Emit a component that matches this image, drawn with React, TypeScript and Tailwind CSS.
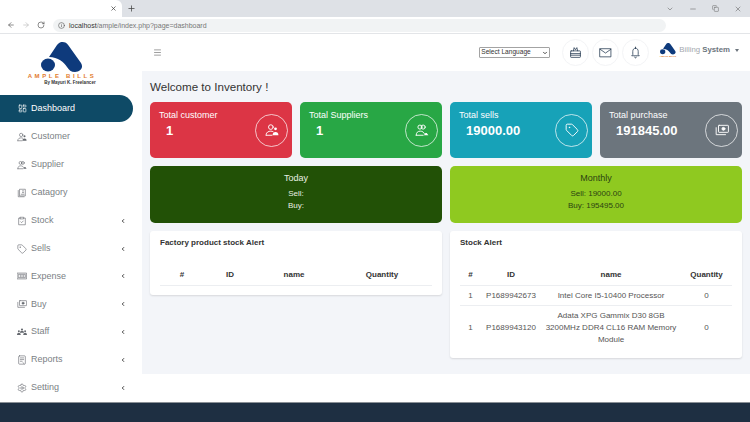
import React from "react";
import { ArrowLeft, ArrowRight, RotateCw, Info, X, Plus, ChevronDown, Minus, Copy, Menu, LayoutDashboard, Tag, Settings, ChevronLeft } from "lucide-react";

type IconProps = { size?: number; className?: string; strokeWidth?: number };

function Base({ size = 10, className, strokeWidth = 1.5, children }: IconProps & { children: React.ReactNode }) {
  return (
    <svg width={size} height={size} viewBox="0 0 24 24" fill="none" stroke="currentColor" strokeWidth={strokeWidth} strokeLinecap="round" strokeLinejoin="round" className={className}>
      {children}
    </svg>
  );
}

const CustomerIcon = (p: IconProps) => (
  <Base {...p}>
    <circle cx="10" cy="7" r="4" />
    <path d="M2 21v-1c0-4 4-6 8-6 1.500 0 3 .3 4 1M2 21h10" />
    <circle cx="18" cy="10" r="2.400" fill="currentColor" stroke="none" />
    <path d="M13 21c0-3.500 2-5.500 5-5.500s5 2 5 5.500z" fill="currentColor" stroke="none" />
  </Base>
);
const SupplierIcon = (p: IconProps) => (
  <Base {...p}>
    <circle cx="8.500" cy="7" r="3.500" />
    <circle cx="14" cy="7" r="3.500" />
    <path d="M2 21c0-5 3-7 7-7s6 2 7 4M2 21h12" />
    <path d="M15 21l3-4h2l3 4z" fill="currentColor" stroke="none" />
  </Base>
);
const CategoryIcon = (p: IconProps) => (
  <Base {...p}>
    <path d="M7 3h13v16H7zM3 6v15h14" />
    <path d="M13 7h3M13 11h3M10 15h7" />
  </Base>
);
const StockIcon = (p: IconProps) => (
  <Base {...p}>
    <path d="M8 5H4v16h16V5h-4" />
    <rect x="8" y="3" width="8" height="4" />
    <path d="m9 14 2 2 4-4" />
  </Base>
);
const ExpenseIcon = (p: IconProps) => (
  <Base {...p}>
    <rect x="1" y="5" width="22" height="14" />
    <rect x="4" y="8" width="16" height="8" />
    <path d="M8 10v4M12 10v4M16 10v4" />
  </Base>
);
const BuyIcon = (p: IconProps) => (
  <Base {...p}>
    <rect x="6" y="4" width="17" height="12" rx="1" />
    <circle cx="14.500" cy="10" r="2.500" fill="currentColor" />
    <path d="M2 8v12h16" />
  </Base>
);
const StaffIcon = (p: IconProps) => (
  <Base {...p} strokeWidth={0}>
    <g fill="currentColor">
      <circle cx="4.500" cy="10" r="2.300" />
      <circle cx="12" cy="6" r="2.600" />
      <circle cx="19.500" cy="10" r="2.300" />
      <path d="M0 19c0-3 2-5 4.500-5S9 16 9 19zM7 14c0-3 2-5 5-5s5 2 5 5zM15 19c0-3 2-5 4.500-5s4.500 2 4.500 5z" />
    </g>
  </Base>
);
const ReportsIcon = (p: IconProps) => (
  <Base {...p}>
    <rect x="4" y="2" width="16" height="20" rx="2" />
    <path d="M8 7h8M8 11h8M8 15h4M14 18l3 3" />
  </Base>
);
const GiftIcon = (p: IconProps) => (
  <Base {...p}>
    <rect x="3" y="9" width="18" height="12" rx="1" />
    <path d="M3 14h18M3 17h18" />
    <path d="M8 9l1.500-6 2.500 4 2.500-4L16 9" />
  </Base>
);
const MailIcon = (p: IconProps) => (
  <Base {...p}>
    <rect x="2" y="5" width="20" height="15" />
    <path d="M2 6l10 7 10-7" />
  </Base>
);
const BellIcon = (p: IconProps) => (
  <Base {...p}>
    <path d="M12 4c-3.500 0-5 3-5 6v6l-2 2h14l-2-2v-6c0-3-1.500-6-5-6zM12 2v2M10.500 20.500a1.500 1.500 0 0 0 3 0" />
  </Base>
);

const nav = [
  { label: "Customer", Icon: CustomerIcon },
  { label: "Supplier", Icon: SupplierIcon },
  { label: "Catagory", Icon: CategoryIcon },
  { label: "Stock", Icon: StockIcon, arrow: true },
  { label: "Sells", Icon: Tag as React.ComponentType<IconProps>, arrow: true },
  { label: "Expense", Icon: ExpenseIcon, arrow: true },
  { label: "Buy", Icon: BuyIcon, arrow: true },
  { label: "Staff", Icon: StaffIcon, arrow: true },
  { label: "Reports", Icon: ReportsIcon, arrow: true },
  { label: "Setting", Icon: Settings as React.ComponentType<IconProps>, arrow: true },
];

const stats = [
  { title: "Total customer", value: "1", bg: "bg-[#dc3545]", Icon: CustomerIcon },
  { title: "Total Suppliers", value: "1", bg: "bg-[#28a745]", Icon: SupplierIcon },
  { title: "Total sells", value: "19000.00", bg: "bg-[#17a2b8]", Icon: Tag as React.ComponentType<IconProps> },
  { title: "Total purchase", value: "191845.00", bg: "bg-[#6c757d]", Icon: BuyIcon },
];

function Logo({ small }: { small?: boolean }) {
  return (
    <svg viewBox="0 0 42 30" className={small ? "w-[16px] h-[11.500px]" : "w-[42px] h-[30px]"}>
      <path d="M16 3C18 .5 20 0 21.500 0 24 0 26 1 27.500 3.500L40 21C43 26 39 30 34 30 30 30 28 28 26 25 23 20 17 15.500 8 15Z" fill="#0e3a7c" />
      <ellipse cx="7" cy="23" rx="7" ry="6.500" fill="#0e3a7c" />
    </svg>
  );
}

function Stat({ title, value, bg, Icon }: (typeof stats)[number]) {
  return (
    <div className={`${bg} rounded-[5px] h-[56px] flex items-center justify-between pl-[9px] pr-[4px] text-white`}>
      <div className="self-start pt-[8px]">
        <div className="text-[9px] leading-[11px]">{title}</div>
        <div className="text-[13px] leading-[16px] font-bold pl-[7px] mt-[2px]">{value}</div>
      </div>
      <div className="w-[33px] h-[33px] rounded-full border border-white/70 flex items-center justify-center">
        <Icon size={14} strokeWidth={1.6} />
      </div>
    </div>
  );
}

function Summary({ title, sell, buy, bg, color }: { title: string; sell: string; buy: string; bg: string; color: string }) {
  return (
    <div className={`${bg} ${color} rounded-[5px] h-[57px] flex flex-col items-center pt-[6px]`}>
      <div className="text-[9px] leading-[13px] mb-[3px]">{title}</div>
      <div className="text-[8px] leading-[12px]">{sell}</div>
      <div className="text-[8px] leading-[12px]">{buy}</div>
    </div>
  );
}

export default function App() {
  return (
    <div className="w-[750px] h-[422px] overflow-hidden flex flex-col bg-white font-['Liberation_Sans',Arial,sans-serif]">
      <div className="h-[17px] shrink-0 bg-[#dee1e6] flex items-center">
        <div className="w-[122px] h-full bg-white rounded-tr-[6px] flex items-center justify-end pr-[5px]">
          <X size={7} strokeWidth={2.5} className="text-[#444]" />
        </div>
        <Plus size={9} strokeWidth={2} className="text-[#444] ml-[5px]" />
        <div className="ml-auto flex items-center gap-[15px] pr-[8px] text-[#555]">
          <ChevronDown size={8} strokeWidth={1.5} />
          <Minus size={8} strokeWidth={1.5} />
          <Copy size={7} strokeWidth={1.5} />
          <X size={8} strokeWidth={1.5} />
        </div>
      </div>
      <div className="h-[17px] shrink-0 bg-white border-b border-[#e3e5e8] flex items-center pl-[7px]">
        <ArrowLeft size={8} strokeWidth={2} className="text-[#555]" />
        <ArrowRight size={8} strokeWidth={2} className="text-[#bbb] ml-[7px]" />
        <RotateCw size={8} strokeWidth={2} className="text-[#555] ml-[7px]" />
        <div className="ml-[8px] w-[613px] h-[13px] rounded-full bg-[#f1f3f4] flex items-center pl-[5px]">
          <Info size={7} strokeWidth={2} className="text-[#555]" />
          <span className="ml-[4px] text-[7px] leading-none text-[#777]">
            <span className="text-[#333]">localhost</span>/ample/index.php?page=dashboard
          </span>
        </div>
      </div>

      <div className="flex-1 flex min-h-0">
        <aside className="w-[142px] shrink-0 bg-white flex flex-col overflow-hidden">
          <div className="h-[61px] shrink-0 flex flex-col items-center pt-[8px] pr-[18px]">
            <Logo />
            <div className="text-[6px] leading-[7px] font-bold tracking-[2.600px] text-[#e27c2d] whitespace-nowrap mt-[1px]">AMPLE BILLS</div>
            <div className="text-[4.500px] leading-[5px] font-bold text-[#333] whitespace-nowrap pl-[16px]">By Mayuri K. Freelancer</div>
          </div>
          <div className="w-[133px] h-[27px] shrink-0 bg-[#0e4a66] rounded-r-[14px] flex items-center pl-[18px] text-white">
            <LayoutDashboard size={9} strokeWidth={1.8} />
            <span className="ml-[4px] text-[9px]">Dashboard</span>
          </div>
          <nav className="flex flex-col pt-[1px]">
            {nav.map(({ label, Icon, arrow }) => (
              <div key={label} className="h-[27.900px] shrink-0 flex items-center pl-[17px] pr-[16px] text-[#7b7f85]">
                <Icon size={10} strokeWidth={1.5} className="text-[#666a70]" />
                <span className="ml-[4px] text-[9px]">{label}</span>
                {arrow && <ChevronLeft size={6} strokeWidth={4} className="ml-auto text-[#444]" />}
              </div>
            ))}
          </nav>
        </aside>

        <div className="flex-1 min-w-0 flex flex-col">
          <header className="h-[37px] shrink-0 bg-white flex items-center pl-[11px] pr-[11px]">
            <Menu size={9} strokeWidth={1.5} className="text-[#555]" />
            <div className="ml-auto flex items-center">
              <div className="relative w-[71px] h-[10.500px]">
                <select className="block appearance-none w-full h-full border border-[#a3a3a3] rounded-[1px] py-0 pl-[1px] pr-0 text-[6.600px] leading-none text-[#333]">
                  <option>Select Language</option>
                </select>
                <ChevronDown size={6} strokeWidth={3.500} className="absolute right-[2px] top-[2.500px] text-[#333]" />
              </div>
              <div className="ml-[12px] flex items-center gap-[3px]">
                <div className="w-[27px] h-[27px] rounded-full border border-[#f3f4f6] flex items-center justify-center text-[#22384f]"><GiftIcon size={13} strokeWidth={1.4} /></div>
                <div className="w-[27px] h-[27px] rounded-full border border-[#f3f4f6] flex items-center justify-center text-[#22384f]"><MailIcon size={13} strokeWidth={1.4} /></div>
                <div className="w-[27px] h-[27px] rounded-full border border-[#f3f4f6] flex items-center justify-center text-[#22384f]"><BellIcon size={13} strokeWidth={1.4} /></div>
              </div>
              <div className="ml-[9px] w-[19px] flex flex-col items-center -mt-[4px]">
                <Logo small />
                <div className="text-[2.500px] leading-[3px] font-bold text-[#e27c2d] whitespace-nowrap">AMPLE BILLS</div>
              </div>
              <div className="flex items-center -mt-[5px]">
                <span className="ml-[2px] text-[7.800px] text-[#a3a7ad] whitespace-nowrap">Billing <b className="text-[#6c757d]">System</b></span>
                <span className="ml-[5px] w-0 h-0 border-x-[2.500px] border-x-transparent border-t-[3px] border-t-[#6c757d]" />
              </div>
            </div>
          </header>

          <main className="flex-1 min-h-0 bg-[#f3f5f9] px-[8px] pt-[8px]">
            <h1 className="text-[11.600px] leading-[16px] text-[#333]">Welcome to Inventory !</h1>
            <div className="grid grid-cols-4 gap-[8px] mt-[7px]">
              {stats.map((s) => <Stat key={s.title} {...s} />)}
            </div>
            <div className="grid grid-cols-2 gap-[8px] mt-[8px]">
              <Summary title="Today" sell="Sell:" buy="Buy:" bg="bg-[#225106]" color="text-[#e8efe2]" />
              <Summary title="Monthly" sell="Sell: 19000.00" buy="Buy: 195495.00" bg="bg-[#8fc920]" color="text-[#2c4412]" />
            </div>
            <div className="grid grid-cols-2 gap-[8px] mt-[8px] items-start">
              <section className="bg-white rounded-[3px] shadow-[0_1px_2px_rgba(0,0,0,0.12)] h-[64px] px-[10px] pt-[7px]">
                <h2 className="text-[8px] leading-[10px] font-bold text-[#333]">Factory product stock Alert</h2>
                <div className="mt-[16px] h-[22px] border-b border-[#eceef1] grid grid-cols-[44px_52px_76px_1fr] items-center text-center text-[8px] font-bold text-[#333]">
                  <span>#</span><span>ID</span><span>name</span><span>Quantity</span>
                </div>
              </section>
              <section className="bg-white rounded-[3px] shadow-[0_1px_2px_rgba(0,0,0,0.12)] h-[127px] px-[10px] pt-[7px]">
                <h2 className="text-[8px] leading-[10px] font-bold text-[#333]">Stock Alert</h2>
                <div className="mt-[16px] text-[8px] text-center text-[#555]">
                  <div className="h-[22px] border-b border-[#eceef1] grid grid-cols-[21px_60px_140px_1fr] items-center font-bold text-[#333]">
                    <span>#</span><span>ID</span><span>name</span><span>Quantity</span>
                  </div>
                  <div className="h-[20px] border-b border-[#eceef1] grid grid-cols-[21px_60px_140px_1fr] items-center">
                    <span>1</span><span>P1689942673</span><span>Intel Core I5-10400 Processor</span><span>0</span>
                  </div>
                  <div className="h-[44px] grid grid-cols-[21px_60px_140px_1fr] items-center">
                    <span>1</span><span>P1689943120</span>
                    <span className="leading-[12px]">Adata XPG Gammix D30 8GB 3200MHz DDR4 CL16 RAM Memory Module</span><span>0</span>
                  </div>
                </div>
              </section>
            </div>
          </main>
          <footer className="h-[28px] shrink-0 bg-white" />
        </div>
      </div>
      <div className="h-[20px] shrink-0 bg-[#1e2f42] border-t border-[#8a9096]" />
    </div>
  );
}
